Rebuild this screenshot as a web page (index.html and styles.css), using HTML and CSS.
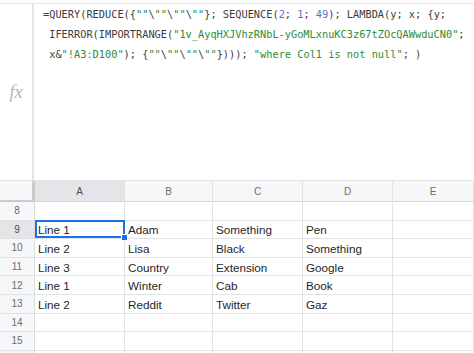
FILE: index.html
```html
<!DOCTYPE html>
<html lang="en">

<head>
    <meta charset="UTF-8">
    <title>Sheet</title>
    <link rel="stylesheet" href="styles.css">
</head>

<body>
    <div class="formula-bar">
        <div class="fx">fx</div>
        <div class="formula">
            <div class="line">=QUERY(REDUCE({<span class="str">""</span>\<span class="str">""</span>\<span class="str">""</span>\<span class="str">""</span>}; SEQUENCE(<span class="num">2</span>; <span class="num">1</span>; <span class="num">49</span>); LAMBDA(y; x; {y;</div>
            <div class="line"> IFERROR(IMPORTRANGE(<span class="str">"1v_AyqHXJVhzRNbL-yGoMLxnuKC3z67tZOcQAWwduCN0"</span>;</div>
            <div class="line"> x&amp;<span class="str">"!A3:D100"</span>); {<span class="str">""</span>\<span class="str">""</span>\<span class="str">""</span>\<span class="str">""</span>}))); <span class="str">"where Col1 is not null"</span>; )</div>
        </div>
    </div>

    <div class="sheet">
        <div class="corner"></div>
        <div class="col-head active">A</div>
        <div class="col-head">B</div>
        <div class="col-head">C</div>
        <div class="col-head">D</div>
        <div class="col-head">E</div>

        <div class="row-head">8</div>
        <div class="cell"></div><div class="cell"></div><div class="cell"></div><div class="cell"></div><div class="cell"></div>

        <div class="row-head active">9</div>
        <div class="cell selected">Line 1<span class="handle"></span></div><div class="cell">Adam</div><div class="cell">Something</div><div class="cell">Pen</div><div class="cell"></div>

        <div class="row-head">10</div>
        <div class="cell">Line 2</div><div class="cell">Lisa</div><div class="cell">Black</div><div class="cell">Something</div><div class="cell"></div>

        <div class="row-head">11</div>
        <div class="cell">Line 3</div><div class="cell">Country</div><div class="cell">Extension</div><div class="cell">Google</div><div class="cell"></div>

        <div class="row-head">12</div>
        <div class="cell">Line 1</div><div class="cell">Winter</div><div class="cell">Cab</div><div class="cell">Book</div><div class="cell"></div>

        <div class="row-head">13</div>
        <div class="cell">Line 2</div><div class="cell">Reddit</div><div class="cell">Twitter</div><div class="cell">Gaz</div><div class="cell"></div>

        <div class="row-head">14</div>
        <div class="cell"></div><div class="cell"></div><div class="cell"></div><div class="cell"></div><div class="cell"></div>

        <div class="row-head">15</div>
        <div class="cell"></div><div class="cell"></div><div class="cell"></div><div class="cell"></div><div class="cell"></div>

        <div class="row-head"></div>
        <div class="cell"></div><div class="cell"></div><div class="cell"></div><div class="cell"></div><div class="cell"></div>
    </div>
</body>

</html>
```

FILE: styles.css
```css
:root {
    --grid-line: #e2e3e3;
    --head-bg: #f6f7f8;
    --head-active: #e3e5e8;
    --head-text: #6a6d70;
    --select-blue: #1a73e8;
}

body {
    margin: 0;
    background-color: #ffffff;
    overflow: hidden;
}

/* Formula bar */
.formula-bar {
    display: flex;
    margin-top: 3px;
    height: 176px;
    border-top: 1px solid #e4e4e4;
    border-bottom: 1px solid #e4e4e4;
}

.fx {
    width: 34px;
    flex-shrink: 0;
    border-right: 2px solid #e4e4e4;
    display: flex;
    justify-content: center;
    align-items: center;
    box-sizing: border-box;
    font-family: "Liberation Serif", serif;
    font-style: italic;
    font-size: 18px;
    color: #b4b4b4;
}

.formula {
    padding-left: 9px;
    font-family: "DejaVu Sans Mono", monospace;
    font-size: 10.3px;
    line-height: 20px;
    color: #3c3c3c;
}

.line {
    white-space: pre;
}

.str {
    color: #2f8a3a;
}

.num {
    color: #5c6bd0;
}

/* Grid */
.sheet {
    display: grid;
    grid-template-columns: 35px 90px 88px 90px 90px 1fr;
    grid-template-rows: 21px;
    grid-auto-rows: 18.6px;
    font-family: "Liberation Sans", Arial, sans-serif;
}

.corner {
    background-color: var(--head-bg);
    border-right: 3px solid #c9cbcd;
    border-bottom: 2px solid #c9cbcd;
    box-sizing: border-box;
}

.col-head,
.row-head {
    background-color: var(--head-bg);
    color: var(--head-text);
    font-size: 10px;
    display: flex;
    justify-content: center;
    align-items: center;
    border-right: 1px solid var(--grid-line);
    border-bottom: 1px solid #d6d8da;
    box-sizing: border-box;
}

.row-head {
    border-bottom-color: var(--grid-line);
    border-right-color: #d6d8da;
}

.col-head.active,
.row-head.active {
    background-color: var(--head-active);
    color: #4a4d50;
}

.cell {
    position: relative;
    border-right: 1px solid var(--grid-line);
    border-bottom: 1px solid var(--grid-line);
    box-sizing: border-box;
    font-size: 11.7px;
    color: #1f1f1f;
    padding: 0 3px;
    display: flex;
    align-items: center;
    padding-top: 1px;
    white-space: nowrap;
}

.cell.selected::after {
    content: '';
    position: absolute;
    left: 0;
    top: -1px;
    right: -1px;
    bottom: 0;
    border: 2px solid var(--select-blue);
}

.handle {
    position: absolute;
    right: -4px;
    bottom: -3px;
    width: 5px;
    height: 5px;
    background-color: var(--select-blue);
    border: 1px solid #ffffff;
    z-index: 1;
}
```
